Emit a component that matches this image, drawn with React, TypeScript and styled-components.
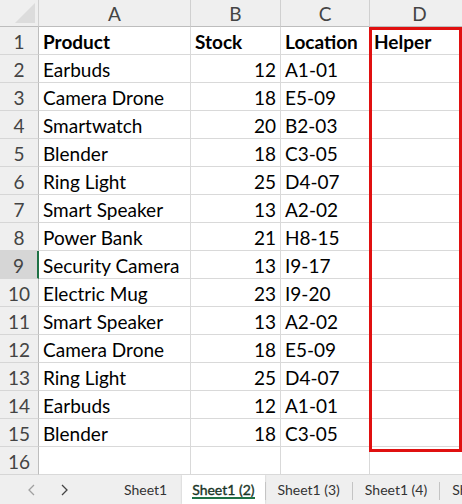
import React from "react";
import styled, { createGlobalStyle } from "styled-components";

const Global = createGlobalStyle`
  html, body { margin: 0; padding: 0; background: #fff; overflow: hidden; }
  body { font-family: Lato, "Liberation Sans", sans-serif; }
`;

const Page = styled.div`
  width: 462px;
  height: 504px;
  overflow: hidden;
  display: flex;
  flex-direction: column;
  background: #fff;
`;

const SheetArea = styled.div`
  position: relative;
  height: 475px;
  flex-shrink: 0;
  overflow: hidden;
`;

const Grid = styled.div`
  display: grid;
  grid-template-columns: 39px 152px 90px 89px 100px;
  grid-auto-rows: 28px;
  grid-template-rows: 27px;
  width: 470px;
`;

const Corner = styled.div`
  background: #efefef;
  border-right: 1px solid #d0d0d0;
  border-bottom: 1px solid #bdbdbd;
  box-sizing: border-box;
  position: relative;
  &::after {
    content: "";
    position: absolute;
    right: 3px;
    bottom: 3px;
    width: 0;
    height: 0;
    border-left: 20px solid transparent;
    border-bottom: 20px solid #dcdcdc;
  }
`;

const ColHead = styled.div`
  background: #efefef;
  border-right: 1px solid #d0d0d0;
  border-bottom: 1px solid #bdbdbd;
  box-sizing: border-box;
  display: flex;
  align-items: center;
  justify-content: center;
  padding-top: 1px;
  color: #444;
  font-size: 19px;
`;

const RowHead = styled.div<{ $active?: boolean }>`
  background: ${(p) => (p.$active ? "#d6d6d6" : "#efefef")};
  border-right: ${(p) => (p.$active ? "2px solid #1e7145" : "1px solid #bdbdbd")};
  border-bottom: 1px solid #d6d6d6;
  box-sizing: border-box;
  display: flex;
  align-items: center;
  justify-content: center;
  padding-top: 2px;
  color: #444;
  font-size: 19px;
`;

const Cell = styled.div<{ $num?: boolean; $bold?: boolean }>`
  border-right: 1px solid #d9d9d9;
  border-bottom: 1px solid #d9d9d9;
  box-sizing: border-box;
  display: flex;
  align-items: center;
  justify-content: ${(p) => (p.$num ? "flex-end" : "flex-start")};
  padding: 2px 4px 0 4px;
  font-size: 19px;
  font-weight: ${(p) => (p.$bold ? 700 : 400)};
  color: #000;
  white-space: nowrap;
  overflow: visible;
`;

const Highlight = styled.div`
  position: absolute;
  left: 369px;
  top: 27px;
  width: 93px;
  height: 425px;
  border: 3px solid #e01010;
  box-sizing: border-box;
  pointer-events: none;
`;

const TabBar = styled.div`
  height: 29px;
  flex-shrink: 0;
  background: #efefef;
  display: flex;
  align-items: stretch;
  font-size: 14px;
  color: #333;
  overflow: hidden;
`;

const Nav = styled.div<{ $dim?: boolean }>`
  width: 32px;
  flex-shrink: 0;
  display: flex;
  align-items: center;
  justify-content: center;
  color: ${(p) => (p.$dim ? "#a0a0a0" : "#444")};
`;

const Navs = styled.div`
  display: flex;
  flex-shrink: 0;
  padding-left: 16px;
  width: 111px;
  box-sizing: border-box;
`;

const Tab = styled.div<{ $active?: boolean; $sep?: boolean }>`
  position: relative;
  flex-shrink: 0;
  display: flex;
  align-items: center;
  padding: ${(p) => (p.$active ? "0 10px" : "0 12px 0 13px")};
  margin-left: ${(p) => (p.$active ? "3px" : "0")};
  white-space: nowrap;
  background: ${(p) => (p.$active ? "#fff" : "transparent")};
  font-weight: 400;
  -webkit-text-stroke: ${(p) => (p.$active ? "0.35px" : "0")};
  color: ${(p) => (p.$active ? "#1a3526" : "#333")};
  box-shadow: ${(p) => (p.$active ? "0 0 2px rgba(0,0,0,0.2)" : "none")};
  &::before {
    content: "";
    display: ${(p) => (p.$sep ? "block" : "none")};
    position: absolute;
    left: 0;
    top: 7px;
    bottom: 4px;
    width: 1px;
    background: #c4c4c4;
  }
`;

const Underline = styled.span`
  position: absolute;
  left: 10px;
  right: 10px;
  bottom: 5px;
  height: 2px;
  background: #1e7145;
`;

const rows: [string, number, string][] = [
  ["Earbuds", 12, "A1-01"],
  ["Camera Drone", 18, "E5-09"],
  ["Smartwatch", 20, "B2-03"],
  ["Blender", 18, "C3-05"],
  ["Ring Light", 25, "D4-07"],
  ["Smart Speaker", 13, "A2-02"],
  ["Power Bank", 21, "H8-15"],
  ["Security Camera", 13, "I9-17"],
  ["Electric Mug", 23, "I9-20"],
  ["Smart Speaker", 13, "A2-02"],
  ["Camera Drone", 18, "E5-09"],
  ["Ring Light", 25, "D4-07"],
  ["Earbuds", 12, "A1-01"],
  ["Blender", 18, "C3-05"],
];

export default function App() {
  return (
    <Page>
      <Global />
      <SheetArea>
        <Grid>
          <Corner />
          {["A", "B", "C", "D"].map((c) => (
            <ColHead key={c}>{c}</ColHead>
          ))}
          <RowHead>1</RowHead>
          <Cell $bold>Product</Cell>
          <Cell $bold>Stock</Cell>
          <Cell $bold>Location</Cell>
          <Cell $bold>Helper</Cell>
          {rows.map((r, i) => (
            <React.Fragment key={i}>
              <RowHead $active={i + 2 === 9}>{i + 2}</RowHead>
              <Cell>{r[0]}</Cell>
              <Cell $num>{r[1]}</Cell>
              <Cell>{r[2]}</Cell>
              <Cell />
            </React.Fragment>
          ))}
          <RowHead>16</RowHead>
          <Cell />
          <Cell />
          <Cell />
          <Cell />
        </Grid>
        <Highlight />
      </SheetArea>
      <TabBar>
        <Navs>
          <Nav $dim>
            <svg width="10" height="14" viewBox="0 0 10 14">
              <path d="M7 2 L2 7 L7 12" fill="none" stroke="currentColor" strokeWidth="1.3" />
            </svg>
          </Nav>
          <Nav>
            <svg width="10" height="14" viewBox="0 0 10 14">
              <path d="M3 2 L8 7 L3 12" fill="none" stroke="currentColor" strokeWidth="1.3" />
            </svg>
          </Nav>
        </Navs>
        <Tab>Sheet1</Tab>
        <Tab $active>
          Sheet1 (2)
          <Underline />
        </Tab>
        <Tab $sep>Sheet1 (3)</Tab>
        <Tab $sep>Sheet1 (4)</Tab>
        <Tab $sep>Sheet1 (5)</Tab>
      </TabBar>
    </Page>
  );
}
